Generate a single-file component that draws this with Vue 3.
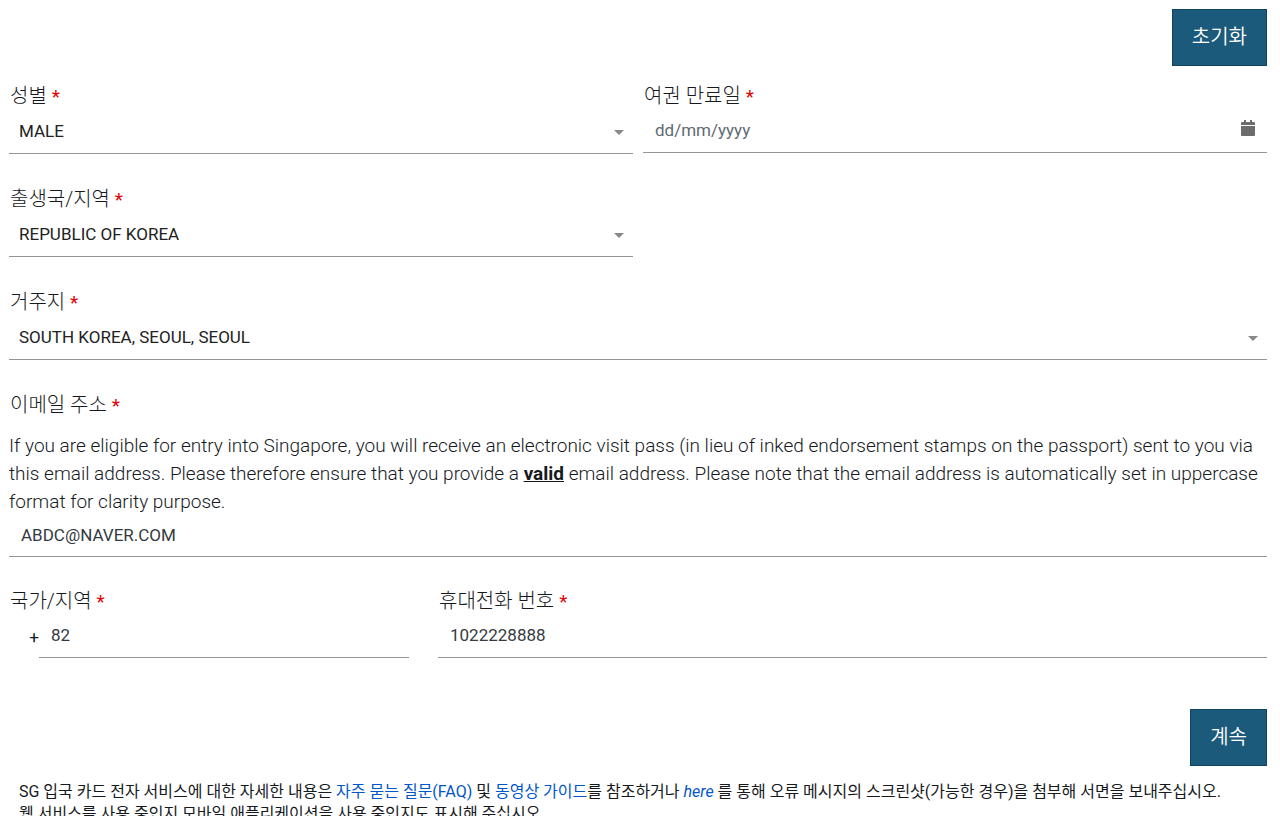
<script setup>
import { ref } from 'vue'
const gender = ref('MALE')
const birth = ref('REPUBLIC OF KOREA')
const residence = ref('SOUTH KOREA, SEOUL, SEOUL')
const expiry = ref('')
const email = ref('ABDC@NAVER.COM')
const code = ref('82')
const mobile = ref('1022228888')
</script>

<template>
  <form class="page" @submit.prevent>
    <div class="actions"><button type="reset" class="btn reset">초기화</button></div>

    <div class="grid halves">
      <div class="field">
        <label for="gender">성별 <span class="req">*</span></label>
        <div class="control choice">
          <select id="gender" v-model="gender"><option>MALE</option><option>FEMALE</option></select>
          <svg class="arrow" viewBox="0 0 10 5"><path d="M0 0h10L5 5z" /></svg>
        </div>
      </div>
      <div class="field">
        <label for="expiry">여권 만료일 <span class="req">*</span></label>
        <div class="control">
          <input id="expiry" v-model="expiry" type="text" placeholder="dd/mm/yyyy" />
          <svg class="calendar" viewBox="0 0 14 16"><path d="M0 6h14v9q0 1-1 1H1q-1 0-1-1zM0 5V3q0-1 1-1h2V0h2v2h4V0h2v2h2q1 0 1 1v2z" /></svg>
        </div>
      </div>
      <div class="field">
        <label for="birth">출생국/지역 <span class="req">*</span></label>
        <div class="control choice">
          <select id="birth" v-model="birth"><option>REPUBLIC OF KOREA</option></select>
          <svg class="arrow" viewBox="0 0 10 5"><path d="M0 0h10L5 5z" /></svg>
        </div>
      </div>
    </div>

    <div class="field">
      <label for="residence">거주지 <span class="req">*</span></label>
      <div class="control choice">
        <select id="residence" v-model="residence"><option>SOUTH KOREA, SEOUL, SEOUL</option></select>
        <svg class="arrow" viewBox="0 0 10 5"><path d="M0 0h10L5 5z" /></svg>
      </div>
    </div>

    <div class="field email">
      <label for="email">이메일 주소 <span class="req">*</span></label>
      <p class="help">If you are eligible for entry into Singapore, you will receive an electronic visit pass (in lieu of inked endorsement stamps on the passport) sent to you via this email address. Please therefore ensure that you provide a <strong>valid</strong> email address. Please note that the email address is automatically set in uppercase format for clarity purpose.</p>
      <div class="control"><input id="email" v-model="email" type="text" /></div>
    </div>

    <div class="grid phone">
      <div class="field">
        <label for="code">국가/지역 <span class="req">*</span></label>
        <div class="prefixed">
          <span class="plus">+</span>
          <div class="control"><input id="code" v-model="code" type="text" /></div>
        </div>
      </div>
      <div class="field">
        <label for="mobile">휴대전화 번호 <span class="req">*</span></label>
        <div class="control"><input id="mobile" v-model="mobile" type="text" /></div>
      </div>
    </div>

    <div class="actions next"><button type="submit" class="btn">계속</button></div>

    <p class="note">SG 입국 카드 전자 서비스에 대한 자세한 내용은 <a href="#faq">자주 묻는 질문(FAQ)</a> 및 <a href="#video">동영상 가이드</a>를 참조하거나 <a href="#here"><em>here</em></a> 를 통해 오류 메시지의 스크린샷(가능한 경우)을 첨부해 서면을 보내주십시오.<br />웹 서비스를 사용 중인지 모바일 애플리케이션을 사용 중인지도 표시해 주십시오.</p>
  </form>
</template>

<style>
body {
  overflow: hidden;
  background: #fff;
}
</style>

<style scoped>
* {
  box-sizing: border-box;
}
.page {
  padding: 9px 13px 0 9px;
  font-family: Roboto, "Noto Sans CJK KR", sans-serif;
  font-size: 17px;
  color: #16191d;
}
.actions {
  display: flex;
  justify-content: flex-end;
}
.btn {
  height: 57px;
  padding: 0 19px 4px;
  border: 1px solid #0f4462;
  background: #1b5a7a;
  color: #fff;
  font: inherit;
  font-weight: 350;
  font-size: 20px;
}
.grid {
  display: grid;
}
.halves {
  grid-template-columns: 1fr 1fr;
  column-gap: 10px;
}
.field {
  height: 103px;
  padding-top: 16px;
}
label {
  display: block;
  height: 28px;
  padding-left: 1px;
  line-height: 28px;
  font-size: 20px;
  font-weight: 300;
}
.req {
  color: #e00000;
  font-size: 19px;
  font-weight: 400;
}
.control {
  display: flex;
  align-items: center;
  position: relative;
  height: 43px;
  border-bottom: 1px solid #949494;
}
.choice {
  height: 44px;
}
.control input,
.control select {
  appearance: none;
  width: 100%;
  height: 100%;
  padding: 0 40px 2px 12px;
  border: 0;
  outline: 0;
  background: transparent;
  font: inherit;
  color: #343a40;
}
.control select {
  padding-left: 10px;
  color: #212121;
}
.control input::placeholder {
  color: #5f6973;
  opacity: 1;
}
.arrow {
  position: absolute;
  right: 9px;
  bottom: 18px;
  width: 10px;
  height: 5px;
  fill: #888;
}
.calendar {
  position: absolute;
  right: 12px;
  bottom: 16px;
  width: 14px;
  height: 16px;
  fill: #6c6c6c;
}
.email {
  height: auto;
}
.email .control {
  height: 41px;
}
.help {
  margin: 13px 0 0;
  font-size: 19px;
  font-weight: 330;
  line-height: 28px;
}
.help strong {
  font-weight: 700;
  text-decoration: underline;
}
.phone {
  grid-template-columns: 400fr 829fr;
  column-gap: 29px;
  padding-top: 14px;
}
.prefixed {
  display: grid;
  grid-template-columns: 30px 1fr;
  align-items: center;
}
.plus {
  text-align: right;
}
.next {
  padding-top: 35px;
}
.note {
  margin: 15px 0 0;
  padding: 0 0 0 10px;
  font-size: 16px;
  line-height: 22px;
}
a {
  color: #0056c7;
  text-decoration: none;
}
</style>
